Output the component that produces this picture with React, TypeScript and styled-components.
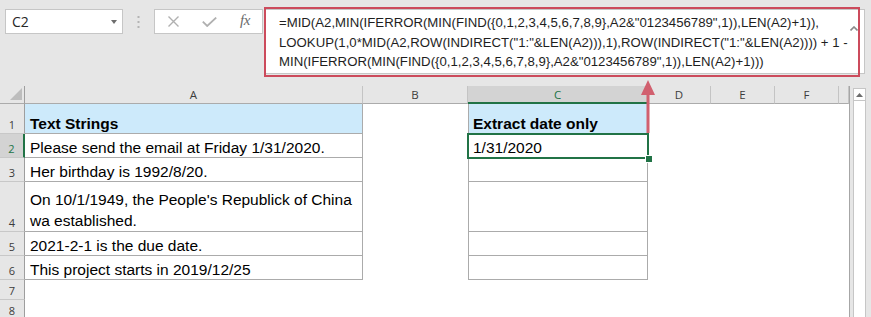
import { Fragment } from 'react';
import styled, { createGlobalStyle } from 'styled-components';

const GlobalStyle = createGlobalStyle`
  html, body {
    margin: 0;
    padding: 0;
    background: #e6e6e6;
  }
`;

const ui = '"Open Sans", "Noto Sans", sans-serif';
const green = '#217346';
const cellLine = '#ababab';

const Window = styled.div`
  position: relative;
  width: 871px;
  height: 317px;
  overflow: hidden;
  background: #e6e6e6;
  font-family: "Liberation Sans", Arial, sans-serif;
`;

const FormulaBar = styled.div`
  display: flex;
  align-items: flex-start;
  height: 86px;
  box-sizing: border-box;
  padding: 9px 6px 0 5px;
`;

const NameBox = styled.div`
  display: flex;
  align-items: center;
  justify-content: space-between;
  width: 118px;
  height: 25px;
  box-sizing: border-box;
  padding: 0 5px 0 6px;
  background: #fff;
  border: 1px solid #c6c6c6;
  font-family: ${ui};
  font-size: 14px;
  color: #262626;
`;

const DropCaret = styled.span`
  width: 0;
  height: 0;
  border-left: 3.5px solid transparent;
  border-right: 3.5px solid transparent;
  border-top: 4px solid #6d6d6d;
`;

const Grip = styled.div`
  display: flex;
  align-items: center;
  justify-content: center;
  width: 31px;
  height: 25px;
`;

const FuncBox = styled.div`
  display: grid;
  grid-template-columns: repeat(3, 36px);
  align-items: center;
  justify-items: center;
  width: 109px;
  height: 25px;
  box-sizing: border-box;
  background: #fff;
  border: 1px solid #c6c6c6;
`;

const Fx = styled.span`
  font-family: "Liberation Serif", serif;
  font-style: italic;
  font-size: 15px;
  color: #6a6a6a;
  letter-spacing: -0.5px;
  margin-top: -2px;
`;

const FormulaBox = styled.div`
  position: relative;
  display: flex;
  flex: 1;
  height: 65px;
  margin-left: 1px;
  box-sizing: border-box;
  background: #fff;
  border: 1px solid #c6c6c6;

  &::after {
    content: "";
    position: absolute;
    top: -3px;
    left: -1px;
    right: 4px;
    bottom: -4px;
    border: 2px solid #cc4b5c;
    pointer-events: none;
  }
`;

const FormulaText = styled.div`
  flex: 1;
  padding: 3px 0 0 14px;
  font-size: 13.2px;
  line-height: 19.5px;
  color: #1e1e1e;
  white-space: pre;
`;

const Collapse = styled.div`
  width: 14px;
  padding-top: 7px;
`;

const Sheet = styled.div`
  display: flex;
  height: 231px;
`;

const Grid = styled.div`
  display: grid;
  grid-template-columns: 25px 338px 105px 180px 63px 64px 64px 10px;
  grid-template-rows: 18px 30px 24px 24px 50px 24px 24px 20px 20px;
  width: 849px;
  background: #fff;
`;

const Corner = styled.div`
  display: flex;
  align-items: flex-end;
  justify-content: flex-end;
  padding: 0 2px 3px 0;
  background: #e6e6e6;
  border-right: 1px solid #9e9e9e;
  border-bottom: 1px solid ${cellLine};
`;

const ColHead = styled.div<{ $active?: boolean }>`
  display: flex;
  align-items: center;
  justify-content: center;
  background: ${p => (p.$active ? '#d3d3d3' : '#e6e6e6')};
  border-right: 1px solid #c4c4c4;
  border-bottom: ${p => (p.$active ? `2px solid ${green}` : `1px solid ${cellLine}`)};
  font-family: ${ui};
  font-size: 11.5px;
  color: ${p => (p.$active ? green : '#3c3c3c')};
`;

const RowHead = styled.div<{ $active?: boolean }>`
  display: flex;
  align-items: flex-end;
  justify-content: center;
  padding-bottom: 2px;
  background: ${p => (p.$active ? '#d3d3d3' : '#e6e6e6')};
  border-right: ${p => (p.$active ? `2px solid ${green}` : '1px solid #9e9e9e')};
  border-bottom: 1px solid #c8c8c8;
  font-family: ${ui};
  font-size: 11px;
  line-height: 13px;
  color: ${p => (p.$active ? green : '#3c3c3c')};
`;

const Cell = styled.div<{ $boxed?: boolean; $leftEdge?: boolean; $title?: boolean; $tall?: boolean }>`
  position: relative;
  display: flex;
  flex-direction: column;
  justify-content: flex-end;
  min-width: 0;
  padding: 0 4px 0 ${p => (p.$leftEdge ? 4 : 5)}px;
  background: ${p => (p.$title ? '#cdeafb' : '#fff')};
  border-left: ${p => (p.$leftEdge ? `1px solid ${cellLine}` : 'none')};
  border-right: ${p => (p.$boxed ? `1px solid ${cellLine}` : 'none')};
  border-bottom: ${p => (p.$boxed ? `1px solid ${cellLine}` : 'none')};
  font-size: 15.5px;
  font-weight: ${p => (p.$title ? 700 : 400)};
  line-height: ${p => (p.$tall ? 21 : 18)}px;
  color: #000;
  white-space: nowrap;
`;

const Selection = styled.span`
  position: absolute;
  top: -1px;
  left: -2px;
  right: -2px;
  bottom: -2px;
  border: 2px solid ${green};
  z-index: 2;

  &::after {
    content: "";
    position: absolute;
    right: -5px;
    bottom: -5px;
    width: 6px;
    height: 6px;
    background: ${green};
    outline: 1px solid #fff;
  }
`;

const ScrollColumn = styled.div`
  width: 21px;
  padding: 2px 4px 0 3px;
  box-sizing: border-box;
  background: #e6e6e6;
  border-left: 1px solid #a6a6a6;
`;

const Track = styled.div`
  height: 100%;
  background: #fff;
  border: 1px solid #c6c6c6;
  border-bottom: none;
`;

const UpButton = styled.div`
  display: flex;
  align-items: center;
  justify-content: center;
  height: 11px;
  border-bottom: 1px solid #c6c6c6;
`;

// red callout arrow pointing from C1 up to the formula bar
const Arrow = styled.svg`
  position: absolute;
  left: 640px;
  top: 79px;
  z-index: 3;
`;

type Row = {
  n: number;
  h?: boolean;
  a?: string[];
  c?: string;
  boxed?: boolean;
  active?: boolean;
};

const rows: Row[] = [
  { n: 1, a: ['Text Strings'], c: 'Extract date only', boxed: true, h: true },
  { n: 2, a: ['Please send the email at Friday 1/31/2020.'], c: '1/31/2020', boxed: true, active: true },
  { n: 3, a: ['Her birthday is 1992/8/20.'], boxed: true },
  { n: 4, a: ["On 10/1/1949, the People's Republick of China", 'wa established.'], boxed: true },
  { n: 5, a: ['2021-2-1 is the due date.'], boxed: true },
  { n: 6, a: ['This project starts in 2019/12/25'], boxed: true },
  { n: 7 },
  { n: 8 },
];

const formula = [
  '=MID(A2,MIN(IFERROR(MIN(FIND({0,1,2,3,4,5,6,7,8,9},A2&"0123456789",1)),LEN(A2)+1)),',
  'LOOKUP(1,0*MID(A2,ROW(INDIRECT("1:"&LEN(A2))),1),ROW(INDIRECT("1:"&LEN(A2)))) + 1 -',
  'MIN(IFERROR(MIN(FIND({0,1,2,3,4,5,6,7,8,9},A2&"0123456789",1)),LEN(A2)+1)))',
];

const columns = ['A', 'B', 'C', 'D', 'E', 'F', ''];

export default function App() {
  return (
    <Window>
      <GlobalStyle />
      <FormulaBar>
        <NameBox>
          C2
          <DropCaret />
        </NameBox>
        <Grip>
          <svg width="3" height="12" viewBox="0 0 3 12">
            <rect x="0.5" y="0" width="2" height="2" fill="#b4b4b4" />
            <rect x="0.5" y="5" width="2" height="2" fill="#b4b4b4" />
            <rect x="0.5" y="10" width="2" height="2" fill="#b4b4b4" />
          </svg>
        </Grip>
        <FuncBox>
          <svg width="11" height="11" viewBox="0 0 11 11">
            <path d="M0.5 0.5 L10.5 10.5 M10.5 0.5 L0.5 10.5" stroke="#b0b0b0" strokeWidth="1.4" />
          </svg>
          <svg width="15" height="10" viewBox="0 0 15 10">
            <path d="M0.8 4.6 L5.2 9 L14.2 0.6" stroke="#b0b0b0" strokeWidth="1.8" fill="none" />
          </svg>
          <Fx>fx</Fx>
        </FuncBox>
        <FormulaBox>
          <FormulaText>{formula.join('\n')}</FormulaText>
          <Collapse>
            <svg width="8" height="5" viewBox="0 0 8 5">
              <path d="M0.5 4.5 L4 1 L7.5 4.5" stroke="#8a8a8a" strokeWidth="1.6" fill="none" />
            </svg>
          </Collapse>
        </FormulaBox>
      </FormulaBar>

      <Sheet>
        <Grid>
          <Corner>
            <svg width="12" height="12" viewBox="0 0 12 12">
              <path d="M12 0 L12 12 L0 12 Z" fill="#bdbdbd" />
            </svg>
          </Corner>
          {columns.map((c, i) => (
            <ColHead key={i} $active={c === 'C'}>
              {c}
            </ColHead>
          ))}
          {rows.map(r => (
            <Fragment key={r.n}>
              <RowHead $active={r.active}>{r.n}</RowHead>
              <Cell $boxed={r.boxed} $title={r.h} $tall={(r.a?.length ?? 0) > 1}>
                {r.a?.map(line => <span key={line}>{line}</span>)}
              </Cell>
              <Cell />
              <Cell $boxed={r.boxed} $leftEdge={r.boxed} $title={r.h}>
                {r.c}
                {r.active && <Selection />}
              </Cell>
              <Cell />
              <Cell />
              <Cell />
              <Cell />
            </Fragment>
          ))}
        </Grid>
        <ScrollColumn>
          <Track>
            <UpButton>
              <svg width="7" height="4" viewBox="0 0 7 4">
                <path d="M0 4 L3.5 0 L7 4 Z" fill="#6d6d6d" />
              </svg>
            </UpButton>
          </Track>
        </ScrollColumn>
      </Sheet>

      <Arrow width="16" height="56" viewBox="0 0 16 56">
        <path d="M8 1 L15 16 L1 16 Z" fill="#d1606f" />
        <rect x="6.5" y="15" width="3" height="39" fill="#d1606f" />
      </Arrow>
    </Window>
  );
}
